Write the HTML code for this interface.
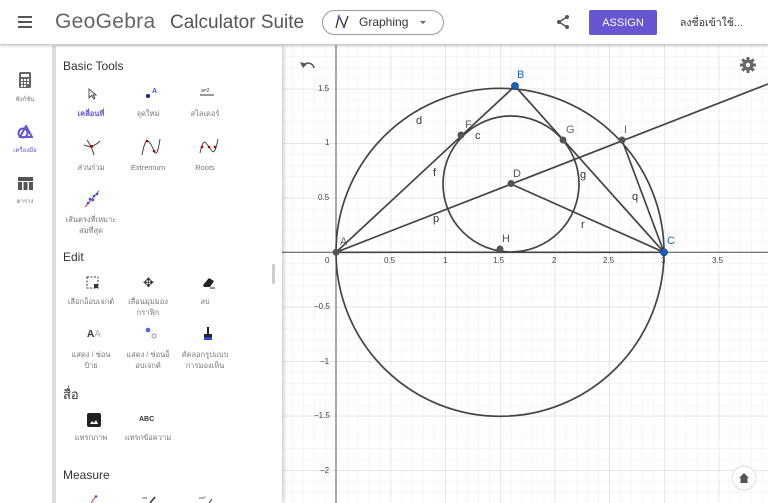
<!DOCTYPE html>
<html><head><meta charset="utf-8"><style>
*{margin:0;padding:0;box-sizing:border-box}
body{width:768px;height:503px;overflow:hidden;background:#fff;font-family:"Liberation Sans","Noto Sans CJK SC",sans-serif;position:relative}
.hdr{position:absolute;left:0;top:0;width:768px;height:45px;background:#fff;border-bottom:1px solid #ccc;box-shadow:0 1px 3px rgba(0,0,0,.2);z-index:5}
.abs{position:absolute}
.side{position:absolute;left:0;top:46px;width:52px;height:457px;background:#fff}
.panel{position:absolute;left:52px;top:46px;width:230px;height:457px;background:#fff;border-left:4px solid #ddd;box-shadow:2px 0 4px rgba(0,0,0,.2);z-index:3}
.h{position:absolute;font-size:12px;color:#333}
.lb{position:absolute;font-size:7.5px;color:#777;text-align:center;width:70px;line-height:11px;font-family:"Liberation Sans","Noto Sans CJK SC",sans-serif}
.sl{position:absolute;font-size:6px;color:#777;text-align:center;width:50px;left:0}
</style></head><body>
<div class="hdr">
 <div class="abs" style="left:18px;top:16px;width:14px;height:2px;background:#555;box-shadow:0 5px 0 #555,0 10px 0 #555"></div>
 <div class="abs" style="left:55px;top:10px;font-size:21px;color:#666;letter-spacing:.3px">GeoGebra</div>
 <div class="abs" style="left:170px;top:12px;font-size:19px;color:#555">Calculator Suite</div>
 <div class="abs" style="left:322px;top:10px;width:122px;height:25px;border:1px solid #999;border-radius:13px"></div>
 <svg class="abs" style="left:334px;top:14px" width="16" height="16"><path d="M2 14 L5 2 L10 13 L14 2" stroke="#333" fill="none" stroke-width="1.3"/><circle cx="5" cy="3" r="1.3" fill="#6557d2"/><circle cx="10" cy="13" r="1.3" fill="#6557d2"/></svg>
 <div class="abs" style="left:359px;top:15px;font-size:12px;color:#333">Graphing</div>
 <div class="abs" style="left:420px;top:21px;border:3px solid transparent;border-top:3px solid #666"></div>
 <svg class="abs" style="left:555px;top:14px" width="16" height="16"><path d="M12 3 L4 8 L12 13" stroke="#555" stroke-width="1.5" fill="none"/><circle cx="12" cy="3" r="2" fill="#555"/><circle cx="4" cy="8" r="2" fill="#555"/><circle cx="12" cy="13" r="2" fill="#555"/></svg>
 <div class="abs" style="left:589px;top:10px;width:68px;height:25px;background:#6557d2;border-radius:2px;color:#fff;font-size:11px;text-align:center;line-height:26px">ASSIGN</div>
 <div class="abs" style="left:680px;top:14px;font-size:10.5px;color:#333;font-family:'Liberation Sans','Noto Sans CJK SC',sans-serif">ลงชื่อเข้าใช้...</div>
</div>
<div class="side">
 <svg class="abs" style="left:18px;top:26px" width="14" height="16"><rect x="1" y="0" width="12" height="16" rx="1.5" fill="#666"/><rect x="3" y="2" width="8" height="3" fill="#fff"/><g fill="#fff"><rect x="3" y="7" width="2" height="2"/><rect x="6" y="7" width="2" height="2"/><rect x="9" y="7" width="2" height="2"/><rect x="3" y="10" width="2" height="2"/><rect x="6" y="10" width="2" height="2"/><rect x="9" y="10" width="2" height="2"/><rect x="3" y="13" width="2" height="2"/><rect x="6" y="13" width="2" height="2"/></g></svg>
 <div class="sl" style="top:48px">ฟังก์ชัน</div>
 <svg class="abs" style="left:17px;top:79px" width="16" height="14"><circle cx="6" cy="8" r="4.5" stroke="#6557d2" stroke-width="2" fill="none"/><path d="M9 1 L15 12 L3 12 Z" stroke="#6557d2" stroke-width="2" fill="none"/></svg>
 <div class="sl" style="top:99px;color:#6557d2">เครื่องมือ</div>
 <svg class="abs" style="left:18px;top:131px" width="15" height="13"><rect x="0" y="0" width="15" height="4" fill="#555"/><rect x="0" y="5" width="4" height="8" fill="#555"/><rect x="5.5" y="5" width="4" height="8" fill="#555"/><rect x="11" y="5" width="4" height="8" fill="#555"/></svg>
 <div class="sl" style="top:150px">ตาราง</div>
</div>
<div class="panel">
 <div class="h" style="left:7px;top:13px">Basic Tools</div>
 <svg class="abs" style="left:31px;top:42px" width="10" height="12"><path d="M2 1 L2 10 L4.5 7.5 L7 11 L8 10 L6 7 L9 7 Z" fill="#fff" stroke="#444" stroke-width=".9"/></svg>
 <div class="lb" style="left:0;top:62px;color:#6557d2;font-weight:bold">เคลื่อนที่</div>
 <svg class="abs" style="left:88px;top:40px" width="14" height="14"><circle cx="4" cy="10" r="2" fill="#1a237e"/><text x="8" y="7" font-size="7" fill="#3556e0" font-weight="bold">A</text></svg>
 <div class="lb" style="left:57px;top:62px">จุดใหม่</div>
 <svg class="abs" style="left:143px;top:40px" width="16" height="12"><text x="2" y="6" font-size="5" fill="#333">a=2</text><line x1="1" y1="9" x2="15" y2="9" stroke="#333"/></svg>
 <div class="lb" style="left:114px;top:62px">สไลเดอร์</div>
 <svg class="abs" style="left:27px;top:92px" width="18" height="18"><path d="M1 7 Q9 11 17 3 M4 2 Q9 9 11 17" stroke="#444" fill="none"/><circle cx="8.5" cy="8.5" r="1.5" fill="#a00"/></svg>
 <div class="lb" style="left:0;top:116px">ส่วนร่วม</div>
 <svg class="abs" style="left:85px;top:91px" width="20" height="20"><path d="M1 18 Q4 2 7 4 T13 14 T19 2" stroke="#444" fill="none"/><circle cx="6" cy="4" r="1.3" fill="#a00"/><circle cx="13" cy="14" r="1.3" fill="#a00"/></svg>
 <div class="lb" style="left:57px;top:116px">Extremum</div>
 <svg class="abs" style="left:143px;top:91px" width="20" height="20"><path d="M1 16 Q4 2 7 6 T13 14 T19 2" stroke="#444" fill="none"/><circle cx="3" cy="10" r="1.3" fill="#a00"/><circle cx="10" cy="10" r="1.3" fill="#a00"/><circle cx="16" cy="10" r="1.3" fill="#a00"/></svg>
 <div class="lb" style="left:114px;top:116px">Roots</div>
 <svg class="abs" style="left:28px;top:144px" width="16" height="18"><line x1="1" y1="17" x2="15" y2="1" stroke="#e53935"/><g fill="#3556e0"><circle cx="4" cy="13" r="1.3"/><circle cx="6" cy="9" r="1.3"/><circle cx="9" cy="10" r="1.3"/><circle cx="10" cy="6" r="1.3"/><circle cx="13" cy="4" r="1.3"/></g></svg>
 <div class="lb" style="left:0;top:168px">เส้นตรงที่เหมาะ<br>สมที่สุด</div>
 <div class="h" style="left:7px;top:204px">Edit</div>
 <svg class="abs" style="left:30px;top:230px" width="14" height="14"><rect x="1" y="1" width="11" height="11" stroke="#333" stroke-dasharray="2 1.5" fill="none"/><rect x="8" y="8" width="4" height="4" fill="#333"/></svg>
 <div class="lb" style="left:0;top:250px">เลือกอ็อบเจกต์</div>
 <div class="abs" style="left:87px;top:229px;font-size:13px;color:#333">✥</div>
 <div class="lb" style="left:57px;top:250px">เลื่อนมุมมอง<br>กราฟิก</div>
 <svg class="abs" style="left:145px;top:230px" width="15" height="13"><path d="M2 9 L8 2 L13 5 L9 11 L3 11 Z" fill="#222"/><line x1="9" y1="12" x2="14" y2="12" stroke="#222"/></svg>
 <div class="lb" style="left:114px;top:250px">ลบ</div>
 <div class="abs" style="left:31px;top:283px;font-size:10px;font-weight:bold;color:#333">A<span style="color:#aaa;font-weight:normal">A</span></div>
 <svg class="abs" style="left:88px;top:280px" width="14" height="14"><circle cx="4" cy="4" r="2.3" fill="#5560f0"/><circle cx="10" cy="10" r="2" fill="none" stroke="#999"/></svg>
 <div class="lb" style="left:0;top:303px">แสดง / ซ่อน<br>ป้าย</div>
 <div class="lb" style="left:57px;top:303px">แสดง / ซ่อนอ็<br>อบเจกต์</div>
 <svg class="abs" style="left:146px;top:281px" width="12" height="14"><rect x="5" y="0" width="2" height="7" fill="#222"/><path d="M2 7 H10 V12 H2 Z" fill="#222"/><rect x="2" y="10" width="8" height="3" fill="#3446d0"/></svg>
 <div class="lb" style="left:114px;top:303px">คัดลอกรูปแบบ<br>การมองเห็น</div>
 <div class="h" style="left:7px;top:338px;font-size:13px">สื่อ</div>
 <svg class="abs" style="left:31px;top:367px" width="14" height="14"><rect x="0" y="0" width="14" height="14" rx="2" fill="#222"/><path d="M3 11 L5 8 L7 10 L9 7 L11 11 Z" fill="#fff"/></svg>
 <div class="lb" style="left:0;top:386px">แทรกภาพ</div>
 <div class="abs" style="left:83px;top:370px;font-size:7px;font-weight:bold;color:#333">ABC</div>
 <div class="lb" style="left:57px;top:386px">แทรกข้อความ</div>
 <div class="h" style="left:7px;top:422px">Measure</div>
 <svg class="abs" style="left:33px;top:449px" width="10" height="8"><line x1="2" y1="8" x2="7" y2="1" stroke="#e53935"/><circle cx="7" cy="1.5" r="1.3" fill="#3556e0"/></svg>
 <svg class="abs" style="left:86px;top:449px" width="16" height="8"><text x="0" y="4" font-size="4" fill="#333">cm</text><line x1="8" y1="8" x2="13" y2="2" stroke="#333" stroke-width="1.5"/></svg>
 <svg class="abs" style="left:143px;top:448px" width="16" height="9"><text x="0" y="5" font-size="4" fill="#333">cm²</text><line x1="10" y1="9" x2="13" y2="5" stroke="#333"/></svg>
 <div class="abs" style="left:216px;top:218px;width:3px;height:20px;background:#ccc;border-radius:2px"></div>
</div>
<svg class="abs" style="left:282px;top:45px" width="486" height="458" viewBox="282 45 486 458">
 <defs>
  <pattern id="mn" x="336" y="252.3" width="10.933" height="10.9" patternUnits="userSpaceOnUse"><path d="M0 0 V10.9 M0 0 H10.933" stroke="#eee" stroke-width="1" fill="none"/></pattern>
  <pattern id="mj" x="336" y="252.3" width="54.67" height="54.5" patternUnits="userSpaceOnUse"><path d="M0 0 V54.5 M0 0 H54.67" stroke="#d4d4d4" stroke-width="1" fill="none"/></pattern>
 </defs>
 <rect x="282" y="45" width="486" height="458" fill="#fff"/>
 <rect x="282" y="45" width="486" height="458" fill="url(#mn)"/>
 <rect x="282" y="45" width="486" height="458" fill="url(#mj)"/>
 <line x1="336" y1="45" x2="336" y2="503" stroke="#555"/>
 <line x1="282" y1="252.3" x2="768" y2="252.3" stroke="#555"/>
 <g font-size="8" fill="#444" font-family="Liberation Sans">
  <text x="325" y="263">0</text><text x="384" y="263">0.5</text><text x="443" y="263">1</text><text x="493" y="263">1.5</text><text x="552" y="263">2</text><text x="603" y="263">2.5</text><text x="661" y="263">3</text><text x="712" y="263">3.5</text>
  <text x="318" y="91">1.5</text><text x="325" y="145">1</text><text x="318" y="200">0.5</text>
  <text x="314" y="309">−0.5</text><text x="320" y="364">−1</text><text x="314" y="418">−1.5</text><text x="320" y="473">−2</text>
 </g>
 <g stroke="#444" stroke-width="1.7" fill="none">
  <circle cx="500" cy="252.3" r="164"/>
  <circle cx="511" cy="184" r="68"/>
  <path d="M336 252.3 L515 86 L664 252.3 Z"/>
  <line x1="336" y1="252.3" x2="768" y2="84"/>
  <line x1="511" y1="184" x2="664" y2="252.3"/>
  <line x1="622" y1="140" x2="664" y2="252.3"/>
 </g>
 <g fill="#555"><circle cx="336" cy="252.3" r="3.5"/><circle cx="461" cy="135" r="3.5"/><circle cx="563" cy="140" r="3.5"/><circle cx="622" cy="140" r="3.5"/><circle cx="511" cy="183.5" r="3.5"/><circle cx="500" cy="249" r="3.5"/></g>
 <g fill="#1565c0" stroke="#1a3a80" stroke-width=".8"><circle cx="515" cy="86" r="3.5"/><circle cx="664" cy="252.3" r="3.5"/></g>
 <g font-size="11" fill="#333" font-family="Liberation Sans">
  <text x="517" y="78" fill="#1565c0">B</text><text x="667" y="244" fill="#1565c0">C</text>
  <text x="340" y="245" fill="#666">A</text><text x="465" y="128" fill="#666">F</text><text x="566" y="133" fill="#666">G</text><text x="624" y="133" fill="#666">I</text><text x="513" y="177" fill="#555">D</text><text x="502" y="242" fill="#555">H</text>
  <text x="416" y="124">d</text><text x="475" y="139">c</text><text x="433" y="176">f</text><text x="580" y="178">g</text><text x="632" y="200">q</text><text x="433" y="222">p</text><text x="581" y="228">r</text>
 </g>
 <path d="M303 66 A6 6 0 0 1 314 68" stroke="#555" stroke-width="1.6" fill="none"/><path d="M300 62 L303 68 L307 64 Z" fill="#555"/>
 <g transform="translate(748 65)" fill="#666"><circle r="5.5"/><g stroke="#666" stroke-width="3"><line x1="0" y1="-8" x2="0" y2="8"/><line x1="-8" y1="0" x2="8" y2="0"/><line x1="-5.7" y1="-5.7" x2="5.7" y2="5.7"/><line x1="-5.7" y1="5.7" x2="5.7" y2="-5.7"/></g><circle r="2.2" fill="#fff"/></g>
 <circle cx="744" cy="478" r="12" fill="#fff" stroke="#ddd"/><path d="M739 478 L744 473 L749 478 H747.5 V483 H740.5 V478 Z" fill="#555"/>
</svg>
</body></html>
